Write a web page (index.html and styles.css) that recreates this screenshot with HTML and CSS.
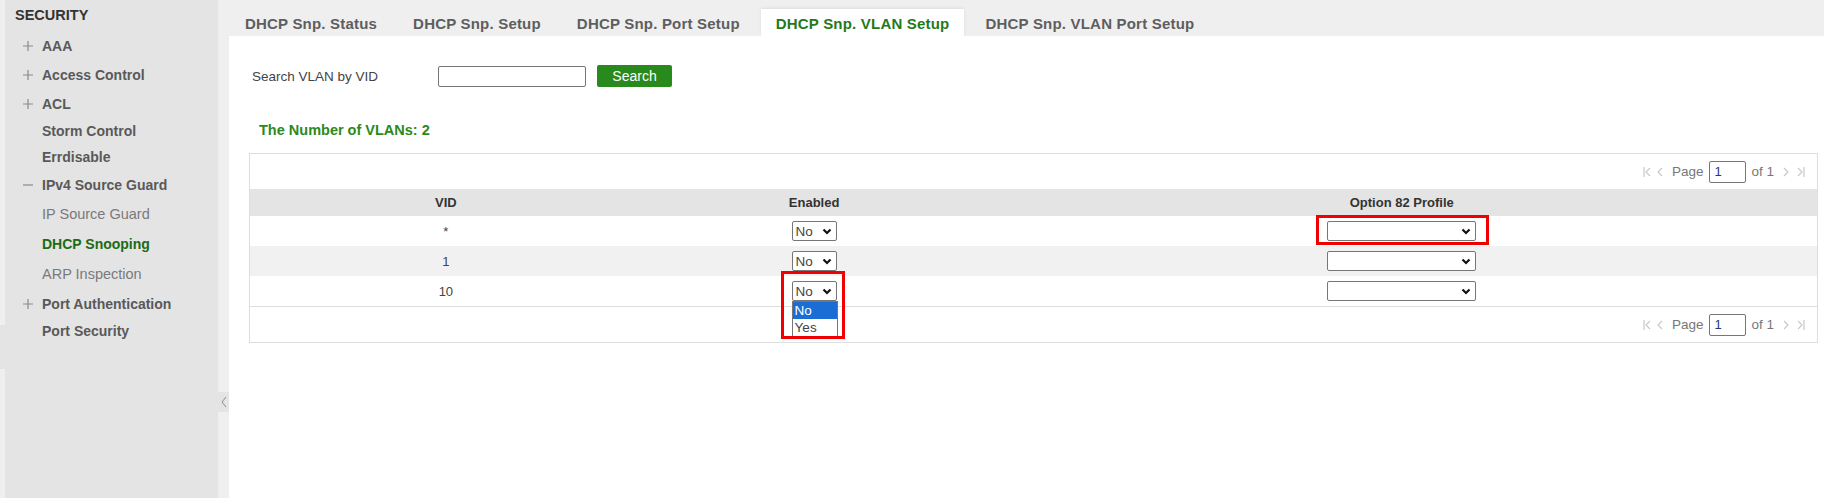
FILE: index.html
```html
<!DOCTYPE html>
<html lang="en">
<head>
<meta charset="utf-8">
<title>DHCP Snooping VLAN Setup</title>
<link rel="stylesheet" href="styles.css">
</head>
<body>
<div class="page">
  <div class="strip"><div class="strip-mark"></div></div>
  <nav class="sidebar">
    <div class="sb-title">SECURITY</div>
    <div class="sb-item top"><svg class="tog" viewBox="0 0 10 10"><path d="M0 5H10M5 0V10"/></svg>AAA</div>
    <div class="sb-item top"><svg class="tog" viewBox="0 0 10 10"><path d="M0 5H10M5 0V10"/></svg>Access Control</div>
    <div class="sb-item top"><svg class="tog" viewBox="0 0 10 10"><path d="M0 5H10M5 0V10"/></svg>ACL</div>
    <div class="sb-item leaf">Storm Control</div>
    <div class="sb-item leaf">Errdisable</div>
    <div class="sb-item top"><svg class="tog" viewBox="0 0 10 10"><path d="M0 5H10"/></svg>IPv4 Source Guard</div>
    <div class="sb-item sub">IP Source Guard</div>
    <div class="sb-item sub current">DHCP Snooping</div>
    <div class="sb-item sub">ARP Inspection</div>
    <div class="sb-item top"><svg class="tog" viewBox="0 0 10 10"><path d="M0 5H10M5 0V10"/></svg>Port Authentication</div>
    <div class="sb-item leaf">Port Security</div>
  </nav>
  <div class="gutter">
    <div class="collapse"><svg viewBox="0 0 6 12"><path d="M5 1L1 6L5 11"/></svg></div>
  </div>
  <main class="main">
    <div class="tabs">
      <div class="tab">DHCP Snp. Status</div>
      <div class="tab">DHCP Snp. Setup</div>
      <div class="tab">DHCP Snp. Port Setup</div>
      <div class="tab active">DHCP Snp. VLAN Setup</div>
      <div class="tab">DHCP Snp. VLAN Port Setup</div>
    </div>
    <div class="content">
      <div class="search-row">
        <span class="search-label">Search VLAN by VID</span>
        <span class="text-input"></span>
        <span class="btn">Search</span>
      </div>
      <div class="count-title">The Number of VLANs: 2</div>
      <div class="table-box">
        <div class="pager">
          <svg class="pg-ico first" viewBox="0 0 8 10"><path d="M1 0V10M7 1L3 5L7 9"/></svg>
          <svg class="pg-ico prev" viewBox="0 0 6 10"><path d="M5 1L1 5L5 9"/></svg>
          <span class="pg-text">Page</span>
          <span class="pg-input">1</span>
          <span class="pg-text of">of 1</span>
          <svg class="pg-ico next" viewBox="0 0 6 10"><path d="M1 1L5 5L1 9"/></svg>
          <svg class="pg-ico last" viewBox="0 0 8 10"><path d="M1 1L5 5L1 9M7 0V10"/></svg>
        </div>
        <div class="grid head">
          <div class="cell">VID</div>
          <div class="cell">Enabled</div>
          <div class="cell">Option 82 Profile</div>
        </div>
        <div class="grid row">
          <div class="cell">*</div>
          <div class="cell"><span class="sel sel-en">No<svg class="chev" viewBox="0 0 10 7"><path d="M1.5 1.5L5 5L8.5 1.5"/></svg></span></div>
          <div class="cell"><span class="sel sel-opt"><svg class="chev" viewBox="0 0 10 7"><path d="M1.5 1.5L5 5L8.5 1.5"/></svg><span class="mark mark-opt"></span></span></div>
        </div>
        <div class="grid row alt">
          <div class="cell">1</div>
          <div class="cell"><span class="sel sel-en">No<svg class="chev" viewBox="0 0 10 7"><path d="M1.5 1.5L5 5L8.5 1.5"/></svg></span></div>
          <div class="cell"><span class="sel sel-opt"><svg class="chev" viewBox="0 0 10 7"><path d="M1.5 1.5L5 5L8.5 1.5"/></svg></span></div>
        </div>
        <div class="grid row">
          <div class="cell">10</div>
          <div class="cell"><span class="sel sel-en">No<svg class="chev" viewBox="0 0 10 7"><path d="M1.5 1.5L5 5L8.5 1.5"/></svg>
            <span class="dd-list"><span class="dd-opt hi">No</span><span class="dd-opt">Yes</span></span>
            <span class="mark mark-en"></span></span></div>
          <div class="cell"><span class="sel sel-opt"><svg class="chev" viewBox="0 0 10 7"><path d="M1.5 1.5L5 5L8.5 1.5"/></svg></span></div>
        </div>
        <div class="pager bottom">
          <svg class="pg-ico first" viewBox="0 0 8 10"><path d="M1 0V10M7 1L3 5L7 9"/></svg>
          <svg class="pg-ico prev" viewBox="0 0 6 10"><path d="M5 1L1 5L5 9"/></svg>
          <span class="pg-text">Page</span>
          <span class="pg-input">1</span>
          <span class="pg-text of">of 1</span>
          <svg class="pg-ico next" viewBox="0 0 6 10"><path d="M1 1L5 5L1 9"/></svg>
          <svg class="pg-ico last" viewBox="0 0 8 10"><path d="M1 1L5 5L1 9M7 0V10"/></svg>
        </div>
      </div>
    </div>
  </main>
</div>
</body>
</html>
```
FILE: styles.css
```css
html, body {
  margin: 0;
  padding: 0;
  height: 100%;
  overflow: hidden;
  background: #efefef;
  font-family: "Liberation Sans", Arial, sans-serif;
}

.page {
  display: flex;
  height: 100vh;
}

/* left edge strip */
.strip {
  width: 5px;
  flex: none;
  background: #efefef;
}
.strip-mark {
  margin-top: 325px;
  height: 44px;
  background: #e4e4e4;
}

/* sidebar */
.sidebar {
  width: 213px;
  flex: none;
  background: #e4e4e4;
  box-sizing: border-box;
}
.sb-title {
  height: 31px;
  line-height: 31px;
  padding-left: 10px;
  font-size: 14.5px;
  font-weight: bold;
  color: #333;
}
.sb-item {
  display: flex;
  align-items: center;
  padding-left: 37px;
  font-size: 14px;
  font-weight: bold;
  color: #595959;
  white-space: nowrap;
}
.sb-item.top {
  height: 29px;
  padding-left: 18px;
}
.sb-item.leaf {
  height: 26px;
}
.sb-item.sub {
  height: 30px;
  font-weight: normal;
  font-size: 14.5px;
  color: #7a7a7a;
}
.sb-item.sub.current {
  font-weight: bold;
  font-size: 14px;
  color: #1d6b14;
}
.tog {
  width: 10px;
  height: 10px;
  margin-right: 9px;
  flex: none;
}
.tog path {
  stroke: #8a8a8a;
  stroke-width: 1.2;
  fill: none;
}

/* gutter with collapse handle */
.gutter {
  width: 11px;
  flex: none;
  background: #efefef;
}
.collapse {
  margin-top: 392px;
  height: 20px;
  background: #e4e4e4;
  display: flex;
  align-items: center;
  justify-content: center;
}
.collapse svg {
  width: 6px;
  height: 12px;
}
.collapse path {
  stroke: #8c8c8c;
  stroke-width: 1;
  fill: none;
}

/* main */
.main {
  flex: 1;
  display: flex;
  flex-direction: column;
  min-width: 0;
}
.tabs {
  height: 36px;
  display: flex;
  align-items: flex-end;
  padding-left: 1px;
  background: #efefef;
  flex: none;
}
.tab {
  height: 27px;
  box-sizing: border-box;
  padding: 3px 15px 0;
  margin-right: 6px;
  line-height: 24px;
  font-size: 15px;
  font-weight: bold;
  letter-spacing: 0.2px;
  color: #5e5e5e;
  white-space: nowrap;
}
.tab.active {
  background: #fff;
  color: #1f7a1c;
  box-shadow: 0 -1px 3px rgba(0, 0, 0, 0.08);
}

.content {
  flex: 1;
  background: #fff;
  padding: 29px 6px 0 20px;
}

.search-row {
  display: flex;
  align-items: center;
  height: 22px;
}
.search-label {
  width: 189px;
  padding-left: 3px;
  box-sizing: border-box;
  font-size: 13.5px;
  color: #444;
}
.text-input {
  width: 148px;
  height: 21px;
  box-sizing: border-box;
  border: 1px solid #767676;
  border-radius: 2px;
  background: #fff;
}
.btn {
  margin-left: 11px;
  width: 75px;
  height: 22px;
  border-radius: 2px;
  background: #288a1d;
  color: #fff;
  font-size: 14px;
  display: flex;
  align-items: center;
  justify-content: center;
}

.count-title {
  margin-top: 33px;
  padding-left: 10px;
  line-height: 20px;
  font-size: 14.5px;
  font-weight: bold;
  color: #2c8a1c;
}

.table-box {
  margin-top: 13px;
  border: 1px solid #dedede;
}

.pager {
  height: 35px;
  display: flex;
  align-items: center;
  justify-content: flex-end;
  padding-right: 12px;
}
.pager.bottom {
  border-top: 1px solid #dedede;
}
.pg-ico {
  height: 10px;
  flex: none;
}
.pg-ico path {
  stroke: #c9c9c9;
  stroke-width: 1.2;
  fill: none;
}
.pg-ico.first { width: 8px; margin-right: 6px; }
.pg-ico.prev { width: 6px; margin-right: 9px; }
.pg-ico.next { width: 6px; margin-left: 9px; }
.pg-ico.last { width: 8px; margin-left: 8px; }
.pg-text {
  font-size: 13.5px;
  color: #777;
}
.pg-text.of {
  margin-left: 5px;
}
.pg-input {
  margin-left: 6px;
  width: 37px;
  height: 22px;
  box-sizing: border-box;
  border: 1px solid #767676;
  border-radius: 2px;
  padding-left: 4px;
  font-size: 13px;
  line-height: 20px;
  color: #223a7a;
}

.grid {
  display: grid;
  grid-template-columns: 25% 22% 53%;
}
.grid.head {
  height: 27px;
  background: #e4e4e4;
  font-size: 13px;
  font-weight: bold;
  color: #333;
}
.grid.row {
  height: 30px;
  font-size: 13px;
  color: #444;
}
.grid.row.alt {
  background: #f1f1f1;
}
.cell {
  display: flex;
  align-items: center;
  justify-content: center;
}

.sel {
  position: relative;
  display: inline-flex;
  align-items: center;
  justify-content: space-between;
  height: 20px;
  box-sizing: border-box;
  border: 1px solid #767676;
  border-radius: 2px;
  background: #fff;
  padding: 0 4px 0 3px;
  font-size: 13.5px;
  color: #444;
}
.sel-en {
  width: 45px;
}
.sel-opt {
  width: 149px;
  justify-content: flex-end;
}
.chev {
  width: 10px;
  height: 7px;
}
.chev path {
  stroke: #111;
  stroke-width: 2.2;
  fill: none;
}

.dd-list {
  position: absolute;
  top: 19px;
  left: -1px;
  width: 46px;
  box-sizing: border-box;
  border: 1px solid #767676;
  background: #fff;
  display: flex;
  flex-direction: column;
  z-index: 2;
}
.dd-opt {
  height: 17px;
  line-height: 17px;
  padding-left: 2px;
  font-size: 13.5px;
  color: #444;
}
.dd-opt.hi {
  background: #1b6dd6;
  color: #fff;
}

.mark {
  position: absolute;
  border: 3px solid #f00000;
  box-sizing: border-box;
  z-index: 3;
}
.mark-en {
  left: -12px;
  top: -11px;
  width: 64px;
  height: 68px;
}
.mark-opt {
  left: -12px;
  top: -7px;
  width: 173px;
  height: 30px;
}
```
